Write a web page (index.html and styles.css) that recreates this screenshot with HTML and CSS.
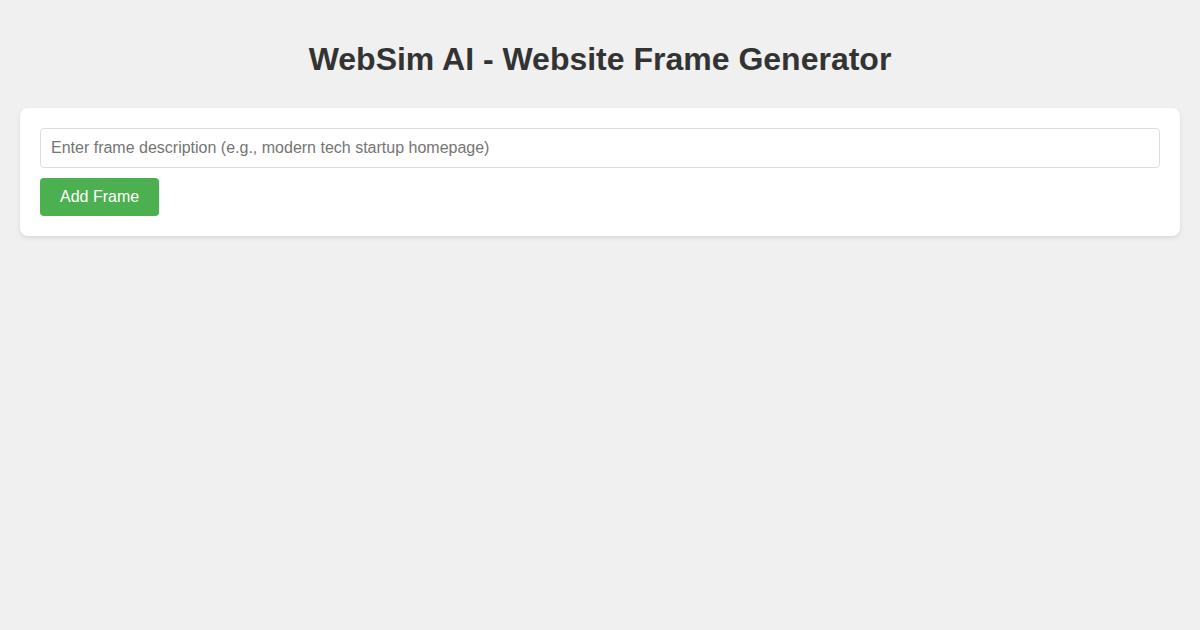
FILE: index.html
```html
<!DOCTYPE html>
<html lang="en">
<head>
    <meta charset="UTF-8">
    <meta name="viewport" content="width=device-width, initial-scale=1.0">
    <title>WebSim AI - Website Frame Generator</title>
    <link rel="stylesheet" href="styles.css">
</head>
<body>

    <h1>WebSim AI - Website Frame Generator</h1>

    <div class="container">
        <input type="text" id="description" placeholder="Enter frame description (e.g., modern tech startup homepage)">
        <button id="add-frame">Add Frame</button>
    </div>

</body>
</html>
```

FILE: styles.css
```css
body {
    font-family: "Liberation Sans", Arial, sans-serif;
    margin: 0;
    padding: 20px;
    background: #f0f0f0;
    color: #333;
}
h1 {
    text-align: center;
    font-size: 32px;
    margin: 21px 0 30px;
}
.container {
    background: white;
    padding: 20px;
    border-radius: 8px;
    box-shadow: 0 2px 4px rgba(0, 0, 0, 0.1);
}
input {
    width: 100%;
    box-sizing: border-box;
    padding: 10px;
    border: 1px solid #ddd;
    border-radius: 4px;
    font-family: inherit;
    font-size: 16px;
    display: block;
}
input::placeholder {
    color: #757575;
}
button {
    margin-top: 10px;
    padding: 10px 20px;
    background: #4CAF50;
    color: white;
    border: none;
    border-radius: 4px;
    font-family: inherit;
    font-size: 16px;
    cursor: pointer;
}
button:hover {
    background: #45a049;
}
```
